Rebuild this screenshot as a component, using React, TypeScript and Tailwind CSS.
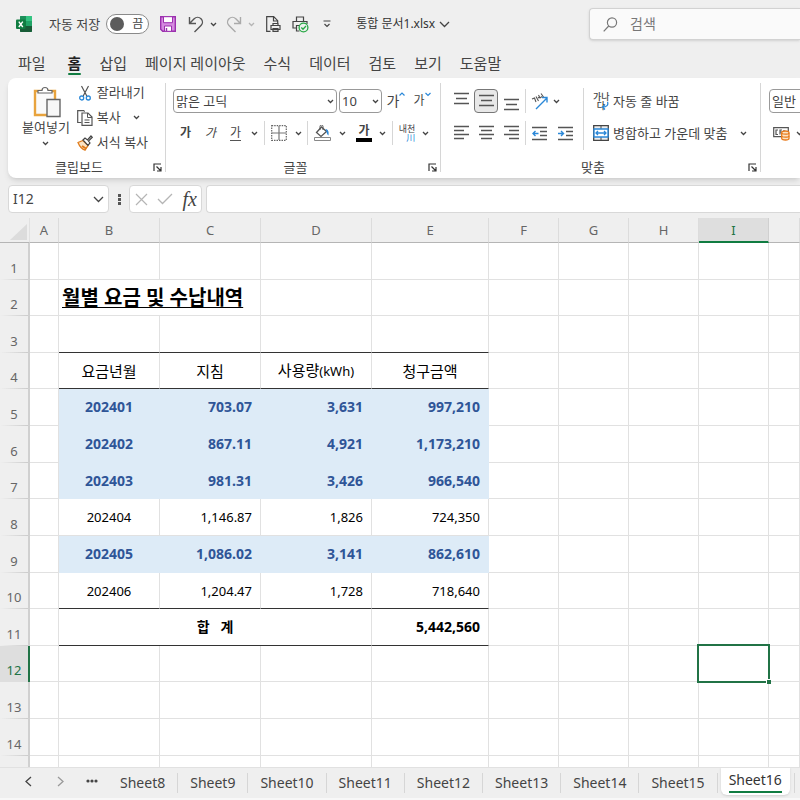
import type { ReactNode } from "react";

type Cell = { text: string; kind?: "head" | "code" | "num" };

type SheetRow = {
  no: number;
  tall?: boolean;
  highlight?: boolean;
  line?: boolean;
  cells?: string[];
};

const rows: SheetRow[] = [
  { no: 1, tall: true },
  { no: 2 },
  { no: 3, tall: true, line: true },
  { no: 4, line: true, cells: ["요금년월", "지침", "사용량(kWh)", "청구금액"] },
  { no: 5, tall: true, highlight: true, cells: ["202401", "703.07", "3,631", "997,210"] },
  { no: 6, tall: true, highlight: true, cells: ["202402", "867.11", "4,921", "1,173,210"] },
  { no: 7, highlight: true, cells: ["202403", "981.31", "3,426", "966,540"] },
  { no: 8, tall: true, cells: ["202404", "1,146.87", "1,826", "724,350"] },
  { no: 9, tall: true, highlight: true, cells: ["202405", "1,086.02", "3,141", "862,610"] },
  { no: 10, line: true, cells: ["202406", "1,204.47", "1,728", "718,640"] },
  { no: 11, tall: true, line: true },
  { no: 12 },
  { no: 13, tall: true },
  { no: 14, tall: true },
];

const columns = ["A", "B", "C", "D", "E", "F", "G", "H", "I", ""];
const menus = ["파일", "홈", "삽입", "페이지 레이아웃", "수식", "데이터", "검토", "보기", "도움말"];
const sheets = ["Sheet8", "Sheet9", "Sheet10", "Sheet11", "Sheet12", "Sheet13", "Sheet14", "Sheet15"];

function Svg({ w, h, children }: { w: number; h: number; children: ReactNode }) {
  return (
    <svg width={w} height={h} viewBox={`0 0 ${w} ${h}`} fill="none" className="shrink-0" aria-hidden="true">
      {children}
    </svg>
  );
}

function Chevron({ color = "#444" }: { color?: string }) {
  return (
    <Svg w={7} h={5}>
      <path d="M1 1l2.5 2.5L6 1" stroke={color} strokeWidth="1.3" />
    </Svg>
  );
}

function WideChevron() {
  return (
    <Svg w={11} h={7}>
      <path d="M1 1l4.5 4.5L10 1" stroke="#444" strokeWidth="1.3" />
    </Svg>
  );
}

function IconButton({ label, className, children }: { label: string; className: string; children: ReactNode }) {
  return (
    <button type="button" aria-label={label} className={`flex h-6 shrink-0 items-center justify-center ${className}`}>
      {children}
    </button>
  );
}

function Lines({ widths, align, gap = 4 }: { widths: number[]; align: "left" | "center" | "right"; gap?: number }) {
  return (
    <Svg w={15} h={widths.length * gap}>
      {widths.map((width, i) => {
        const x = align === "left" ? 0 : align === "right" ? 15 - width : (15 - width) / 2;
        return <path key={i} d={`M${x} ${i * gap + 1.5}h${width}`} stroke="#555" strokeWidth="1.4" />;
      })}
    </Svg>
  );
}

function Divider() {
  return <span className="h-6 w-px shrink-0 bg-[#d6d6d6]" />;
}

function Group({ name, className, children }: { name: string; className: string; children: ReactNode }) {
  return (
    <section aria-label={name} className={`relative flex shrink-0 flex-col ${className}`}>
      <div className="h-20">{children}</div>
      <div className="flex h-[18px] items-center justify-center pr-4 leading-[18px]">{name}</div>
      <button type="button" aria-label={`${name} 설정`} className="absolute right-1 bottom-1.5">
        <Svg w={9} h={9}>
          <path d="M1 8V1h7M3.5 3.5l4 4M8 4v4H4" stroke="#333" strokeWidth="1.2" />
        </Svg>
      </button>
      <span className="absolute top-[5px] right-0 bottom-[6px] w-px bg-[#d6d6d6]" />
    </section>
  );
}

function TitleBar() {
  return (
    <header className="flex h-12 shrink-0 items-center">
      <div className="flex shrink-0 items-center pl-4">
        <Svg w={16} h={16}>
          <rect x="4" y="0" width="12" height="16" rx="1" fill="#21a366" />
          <path d="M4 1a1 1 0 011-1h5v5H4z" fill="#1c8f5a" />
          <path d="M10 0h5a1 1 0 011 1v4h-6z" fill="#33c481" />
          <path d="M4 5h6v5H4z" fill="#107c41" />
          <path d="M4 10h12v5a1 1 0 01-1 1H5a1 1 0 01-1-1z" fill="#185c37" />
          <rect x="0" y="3.5" width="9.5" height="9.5" rx="1" fill="#107c41" />
          <path d="M2.8 5.6l4 5.4M6.8 5.6l-4 5.4" stroke="#fff" strokeWidth="1.4" />
        </Svg>
        <label className="relative ml-[17px] flex items-center gap-1.5 leading-5">
          <span>자동 저장</span>
          <input type="checkbox" className="sr-only" />
          <span className="flex h-5 w-[43px] items-center gap-2 rounded-full border border-[#8a8a8a] bg-white pl-[3px]">
            <span className="size-3.5 rounded-full bg-[#5c5c5c]" />
            <span className="text-xs leading-4">끔</span>
          </span>
        </label>
        <IconButton label="저장" className="ml-1 w-[30px]">
          <Svg w={16} h={16}>
            <path d="M.7.7h14.6v14.6H2.7l-2-2z" fill="#d58be0" stroke="#9b2fae" strokeWidth="1.4" />
            <path d="M3.5.7h9v6h-9z" fill="#fff" stroke="#9b2fae" />
            <path d="M4.5 10h7v5.3h-7z" fill="#fff" stroke="#9b2fae" />
            <path d="M6.5 12v3" stroke="#9b2fae" strokeWidth="1.4" />
          </Svg>
        </IconButton>
        <IconButton label="실행 취소" className="w-[26px]">
          <Svg w={16} h={17}>
            <path d="M1.5 1v6.5H8M2 7l4.2-4.2a4.8 4.8 0 016.8 6.8L6.5 16" stroke="#555" strokeWidth="1.4" />
          </Svg>
        </IconButton>
        <IconButton label="실행 취소 목록" className="w-2">
          <Chevron />
        </IconButton>
        <IconButton label="다시 실행" className="ml-1 w-[26px]">
          <Svg w={16} h={17}>
            <path d="M14.5 1v6.5H8M14 7L9.8 2.8A4.8 4.8 0 003 9.6L9.5 16" stroke="#aaa" strokeWidth="1.4" />
          </Svg>
        </IconButton>
        <IconButton label="다시 실행 목록" className="w-2">
          <Chevron color="#b5b5b5" />
        </IconButton>
        <IconButton label="인쇄 미리 보기" className="ml-1 w-7">
          <Svg w={15} h={16}>
            <path d="M4.5 15.3H.7V.7h7l4 4V7M7.5.7V5h4" stroke="#444" strokeWidth="1.2" />
            <path d="M5 9.5h9v4H5zM7 9.500v-2h5v2M7 12.5h5v2.8H7z" stroke="#444" strokeWidth="1.2" fill="#efefef" />
          </Svg>
        </IconButton>
        <IconButton label="빠른 인쇄" className="w-[26px]">
          <Svg w={17} h={17}>
            <path d="M4.500 5.500V1h7v4.500M4 12H1V5.500h14V8M4.500 9.500h4M4.500 9v6h3" stroke="#444" strokeWidth="1.2" />
            <circle cx="11.5" cy="11.5" r="4.4" stroke="#27a845" strokeWidth="1.3" fill="#efefef" />
            <path d="M9.3 11.5l1.7 1.7 3-3.2" stroke="#27a845" strokeWidth="1.3" />
          </Svg>
        </IconButton>
        <IconButton label="빠른 실행 도구 모음 사용자 지정" className="w-7">
          <Svg w={8} h={8}>
            <path d="M.5 1h7M1.5 4L4 6.5 6.5 4" stroke="#444" strokeWidth="1.2" />
          </Svg>
        </IconButton>
        <button type="button" className="ml-[15px] flex items-center gap-1 text-xs leading-5 text-[#333]">
          통합 문서1.xlsx
          <WideChevron />
        </button>
      </div>
      <label className="ml-auto flex h-8 w-[211px] shrink-0 items-center gap-3 rounded-l border border-r-0 border-[#d2d2d2] bg-[#fafafa] pl-[13px] shadow-sm">
        <Svg w={15} h={15}>
          <circle cx="9" cy="5.5" r="4.6" stroke="#777" strokeWidth="1.2" />
          <path d="M5.7 9l-5 5.3" stroke="#777" strokeWidth="1.2" />
        </Svg>
        <input type="search" aria-label="검색" placeholder="검색" className="w-full min-w-0 text-sm leading-5 outline-none placeholder:text-[#777]" />
      </label>
    </header>
  );
}

function MenuBar() {
  return (
    <nav className="flex h-[30px] shrink-0 pl-[9px] text-[15px]">
      {menus.map((menu) => (
        <a
          key={menu}
          href="#"
          className={
            menu === "홈"
              ? "relative ml-1 px-[9px] leading-[30px] font-bold text-[#222] after:absolute after:inset-x-[9px] after:bottom-[3px] after:h-0.5 after:rounded after:bg-[#107c41]"
              : "px-[9px] leading-[30px]"
          }
        >
          {menu}
        </a>
      ))}
    </nav>
  );
}

function ClipboardGroup() {
  return (
    <Group name="클립보드" className="w-[158px]">
      <div className="flex gap-[7px] pt-0.5 pl-3.5">
        <button type="button" className="flex flex-col items-center pt-1.5">
          <Svg w={30} h={32}>
            <path d="M4 5h20v24H4z" fill="#fafafa" stroke="#e8a33d" strokeWidth="2.4" />
            <path d="M7 7V4.5h4a3 3 0 016 0h4V7z" fill="#fff" stroke="#666" strokeWidth="1.2" />
            <path d="M16 13.5h13v17H16z" fill="#f7f7f7" stroke="#666" strokeWidth="1.4" />
          </Svg>
          <span className="leading-[18px]">붙여넣기</span>
          <span className="flex h-3.5 items-center">
            <Chevron />
          </span>
        </button>
        <div>
          <button type="button" className="flex h-[25px] items-center gap-1">
            <Svg w={16} h={16}>
              <path d="M4.5 1l5.3 10M11.5 1L6.200 11" stroke="#555" strokeWidth="1.2" />
              <circle cx="4.7" cy="13" r="2" stroke="#2b88d8" strokeWidth="1.3" />
              <circle cx="11.3" cy="13" r="2" stroke="#2b88d8" strokeWidth="1.3" />
            </Svg>
            잘라내기
          </button>
          <div className="flex h-[25px] items-center">
            <button type="button" className="flex items-center gap-1">
              <Svg w={16} h={16}>
                <path d="M4.5 12.5H.7V.7h6l1 1" stroke="#555" strokeWidth="1.2" />
                <path d="M5 3h6l4 4v8.3H5z" fill="#fff" stroke="#555" strokeWidth="1.2" />
                <path d="M10.5 3v4.5H15M7.5 10h5M7.5 12.5h5" stroke="#555" />
              </Svg>
              복사
            </button>
            <IconButton label="복사 옵션" className="ml-1 w-6">
              <Chevron />
            </IconButton>
          </div>
          <button type="button" className="flex h-[25px] items-center gap-1">
            <Svg w={16} h={16}>
              <path d="M1 7.500l5-2 5 5-3 4.700c-3-1-5.500-4-7-7.700z" fill="#fbe3c4" stroke="#e07b1a" strokeWidth="1.3" />
              <path d="M5 11l4 2.5" stroke="#e07b1a" strokeWidth="2" />
              <path d="M6 5l2-2 2.500 2L14 1l1.300 1.300L11.500 6l1.500 2-2 2.300z" fill="#fff" stroke="#444" strokeWidth="1.2" />
            </Svg>
            서식 복사
          </button>
        </div>
      </div>
    </Group>
  );
}

function FontGroup() {
  return (
    <Group name="글꼴" className="w-[275px]">
      <div className="flex items-center gap-0.5 pt-[11px] pl-[7px]">
        <span className="relative flex items-center">
          <select aria-label="글꼴 이름" className="h-6 w-[164px] appearance-none rounded border border-[#999] bg-white pl-0.5 leading-5">
            <option>맑은 고딕</option>
          </select>
          <span className="pointer-events-none absolute right-[3px]">
            <Chevron />
          </span>
        </span>
        <span className="relative flex items-center">
          <select aria-label="글꼴 크기" className="h-6 w-[43px] appearance-none rounded border border-[#999] bg-white pl-0.5 leading-5">
            <option>10</option>
          </select>
          <span className="pointer-events-none absolute right-[3px]">
            <Chevron />
          </span>
        </span>
        <IconButton label="글꼴 크기 크게" className="w-6 items-start text-sm leading-6">
          가
          <Svg w={6} h={14}>
            <path d="M.5 6.500L3 4l2.500 2.500" stroke="#2b88d8" strokeWidth="1.2" />
          </Svg>
        </IconButton>
        <IconButton label="글꼴 크기 작게" className="w-6 items-start text-xs leading-6">
          가
          <Svg w={6} h={14}>
            <path d="M.5 4L3 6.500 5.500 4" stroke="#2b88d8" strokeWidth="1.2" />
          </Svg>
        </IconButton>
      </div>
      <div className="flex items-center pt-2 pl-[7px] text-xs">
        <IconButton label="굵게" className="w-[25px] font-bold">
          가
        </IconButton>
        <IconButton label="기울임꼴" className="w-[25px] italic">
          가
        </IconButton>
        <IconButton label="밑줄" className="w-[25px]">
          <span className="border-b border-[#555] leading-[15px]">가</span>
        </IconButton>
        <IconButton label="밑줄 종류" className="mr-1 w-3">
          <Chevron />
        </IconButton>
        <Divider />
        <IconButton label="테두리" className="w-7">
          <Svg w={16} h={16}>
            <path d="M.7.7h14.6v14.6H.7z" stroke="#666" strokeWidth="1.2" strokeDasharray="1.5 1" />
            <path d="M8 1v14M1 8h14" stroke="#777" strokeWidth="1.2" />
          </Svg>
        </IconButton>
        <IconButton label="테두리 종류" className="mr-1 w-2.5">
          <Chevron />
        </IconButton>
        <Divider />
        <IconButton label="채우기 색" className="w-7">
          <Svg w={17} h={16}>
            <path d="M7.500 2l5 4.500-5.500 5-4.500-4z" fill="#fff" stroke="#555" strokeWidth="1.3" />
            <path d="M6 5V1.500a1.500 1.500 0 013 0V5" stroke="#555" />
            <path d="M11.500 4c3 .5 3.500 3 3 6.500-1.500-.5-1.500-3-3-6.500z" fill="#2b88d8" />
            <path d="M.5 12.500h16v3H.5z" fill="#fff" stroke="#888" />
          </Svg>
        </IconButton>
        <IconButton label="채우기 색 목록" className="mr-1 w-3">
          <Chevron />
        </IconButton>
        <IconButton label="글꼴 색" className="w-6">
          <span className="border-b-4 border-black px-0.5 leading-[14px] font-bold">가</span>
        </IconButton>
        <IconButton label="글꼴 색 목록" className="mr-1 w-3">
          <Chevron />
        </IconButton>
        <Divider />
        <IconButton label="윗주 표시" className="w-7">
          <span className="flex flex-col text-[9px] leading-[9px]">
            <span>내천</span>
            <span className="text-right text-[#2b88d8]">川</span>
          </span>
        </IconButton>
        <IconButton label="윗주 옵션" className="w-2">
          <Chevron />
        </IconButton>
      </div>
    </Group>
  );
}

function AlignGroup() {
  return (
    <Group name="맞춤" className="w-80">
      <div className="flex pt-2.5 pl-2">
        <div className="pt-px">
          <div className="flex items-center">
            <IconButton label="위쪽 맞춤" className="w-[25px] pb-1">
              <Lines widths={[15, 11, 15]} align="center" gap={5} />
            </IconButton>
            <IconButton label="가운데 맞춤" className="w-6 rounded border border-[#777] bg-[#e8e8e8]">
              <Lines widths={[15, 11, 15]} align="center" gap={5} />
            </IconButton>
            <IconButton label="아래쪽 맞춤" className="w-[27px] pt-2">
              <Lines widths={[15, 11, 15]} align="center" gap={5} />
            </IconButton>
            <Divider />
            <IconButton label="방향" className="w-[26px]">
              <Svg w={17} h={17}>
                <path d="M5 16L16 5M11 4.500h5v5" stroke="#2b88d8" strokeWidth="1.4" />
                <path d="M1 6l2.500-1L5 9M5 3.500L7.500 8M7 5l1.500-1M7.500 2L9 5l2-1.500M10 .5L12.500 4" stroke="#555" strokeWidth="1.1" />
              </Svg>
            </IconButton>
            <IconButton label="방향 목록" className="w-2">
              <Chevron />
            </IconButton>
          </div>
          <div className="flex items-center pt-2">
            <IconButton label="왼쪽 맞춤" className="w-[25px]">
              <Lines widths={[15, 10, 15, 10]} align="left" />
            </IconButton>
            <IconButton label="가로 가운데 맞춤" className="w-6">
              <Lines widths={[15, 11, 15, 11]} align="center" />
            </IconButton>
            <IconButton label="오른쪽 맞춤" className="w-[27px]">
              <Lines widths={[15, 10, 15, 10]} align="right" />
            </IconButton>
            <Divider />
            <IconButton label="내어쓰기" className="w-[26px]">
              <Svg w={15} h={15}>
                <path d="M0 1.500h15M8 5.500h7M8 9.500h7M0 13.500h15" stroke="#555" strokeWidth="1.4" />
                <path d="M6.500 7.500H1M3.500 5L1 7.500 3.500 10" stroke="#2b88d8" strokeWidth="1.4" />
              </Svg>
            </IconButton>
            <IconButton label="들여쓰기" className="w-[26px]">
              <Svg w={15} h={15}>
                <path d="M0 1.500h15M8 5.500h7M8 9.500h7M0 13.500h15" stroke="#555" strokeWidth="1.4" />
                <path d="M0 7.500h5.500M3 5l2.500 2.500L3 10" stroke="#2b88d8" strokeWidth="1.4" />
              </Svg>
            </IconButton>
          </div>
        </div>
        <span className="ml-[5px] h-[62px] w-px bg-[#d6d6d6]" />
        <div className="flex flex-col gap-2 pt-px pl-[9px]">
          <button type="button" className="flex h-6 items-center gap-1 leading-5">
            <span className="relative flex w-4 flex-col text-[9px] leading-[9px] font-medium whitespace-nowrap">
              <span>가나</span>
              <span>다</span>
              <span className="absolute right-0 bottom-0">
                <Svg w={8} h={8}>
                  <path d="M6.500 0c1 3-.5 5-5 5M4 2.500L1.500 5 4 7.500" stroke="#2b88d8" strokeWidth="1.3" />
                </Svg>
              </span>
            </span>
            자동 줄 바꿈
          </button>
          <div className="flex items-center">
            <button type="button" className="flex h-6 items-center gap-1 leading-5">
              <Svg w={16} h={16}>
                <path d="M.7.7h14.6v14.6H.7z" fill="#eee" stroke="#444" strokeWidth="1.3" />
                <path d="M8 1v3M8 12v3" stroke="#444" />
                <path d="M1 4h14v8H1z" fill="#fff" stroke="#2b88d8" strokeWidth="1.4" />
                <path d="M3 8h10M5 6L3 8l2 2M11 6l2 2-2 2" stroke="#2b88d8" strokeWidth="1.3" />
              </Svg>
              병합하고 가운데 맞춤
            </button>
            <IconButton label="병합 옵션" className="ml-1.5 w-5">
              <Chevron />
            </IconButton>
          </div>
        </div>
      </div>
    </Group>
  );
}

function Ribbon() {
  return (
    <div className="ml-2 flex h-[100px] shrink-0 overflow-hidden rounded-l-lg bg-white shadow-md">
      <ClipboardGroup />
      <FontGroup />
      <AlignGroup />
      <section aria-label="표시 형식" className="flex min-w-0 flex-1 flex-col gap-2 overflow-hidden pt-[11px] pl-2">
        <select aria-label="표시 형식" className="h-6 w-32 shrink-0 appearance-none rounded border border-[#999] bg-white pl-0.5 leading-5">
          <option>일반</option>
        </select>
        <div className="flex items-center">
          <IconButton label="회계 표시 형식" className="w-6">
            <Svg w={17} h={15}>
              <path d="M.7 1.700h14.600v9H.7z" stroke="#555" strokeWidth="1.2" />
              <path d="M5 4H3v4.500h2M9 4H7v4.500M7 6h2M11 4v2" stroke="#555" strokeWidth="1.2" />
              <path d="M8.700 6.500c0-2 7.300-2 7.300 0v6c0 2-7.300 2-7.300 0z" fill="#fbe3c4" stroke="#e8791a" strokeWidth="1.3" />
              <path d="M8.700 7c0 1.500 7.300 1.500 7.300 0M8.700 10c0 1.500 7.300 1.500 7.300 0" stroke="#e8791a" strokeWidth="1.2" />
            </Svg>
          </IconButton>
          <IconButton label="회계 표시 형식 목록" className="w-3">
            <Chevron />
          </IconButton>
        </div>
      </section>
    </div>
  );
}

function FormulaBar() {
  return (
    <div className="mt-[7px] flex h-7 shrink-0 items-center pl-2">
      <label className="flex h-7 w-[101px] items-center rounded border border-[#d8d8d8] bg-white pr-1">
        <input aria-label="이름 상자" defaultValue="I12" className="w-full min-w-0 pl-1 text-sm leading-5 outline-none" />
        <WideChevron />
      </label>
      <span className="flex w-5 justify-center">
        <Svg w={3} h={11}>
          <path d="M0 0h3v3H0zM0 4h3v3H0zM0 8h3v3H0z" fill="#555" />
        </Svg>
      </span>
      <div className="flex h-7 w-[73px] items-center justify-between rounded border border-[#d8d8d8] bg-white pr-1 pl-[5px]">
        <button type="button" aria-label="취소">
          <Svg w={13} h={13}>
            <path d="M1 1l11 11M12 1L1 12" stroke="#b5b5b5" strokeWidth="1.2" />
          </Svg>
        </button>
        <button type="button" aria-label="입력">
          <Svg w={16} h={12}>
            <path d="M1 6l4.500 4.500L15 1" stroke="#b5b5b5" strokeWidth="1.3" />
          </Svg>
        </button>
        <button type="button" className="font-['Liberation_Serif',serif] text-xl leading-6 italic">
          fx
        </button>
      </div>
      <input aria-label="수식 입력줄" className="ml-1 h-7 min-w-0 flex-1 rounded-l border border-r-0 border-[#d8d8d8] bg-white px-2 outline-none" />
    </div>
  );
}

function DataCell({ text, kind, highlight, line }: Cell & { highlight?: boolean; line?: boolean }) {
  const align = kind === "num" ? "pr-2 text-right" : "text-center";
  const size = highlight ? "text-sm font-bold text-[#2f5597]" : kind === "head" ? "text-[15px]" : "";
  const fill = highlight ? "border-[#ddebf7] bg-[#ddebf7]" : "border-[#e1e1e1]";
  return (
    <td className={`border-r border-b ${align} ${size} ${fill} ${line ? "border-b-[#333]" : ""}`}>
      {text.endsWith("(kWh)") ? (
        <>
          {text.replace("(kWh)", "")}
          <span className="text-[13px]">(kWh)</span>
        </>
      ) : (
        text
      )}
    </td>
  );
}

function BodyCells({ row }: { row: SheetRow }) {
  if (row.cells) {
    return row.cells.map((text, i) => (
      <DataCell
        key={i}
        text={text}
        kind={row.no === 4 ? "head" : i === 0 ? "code" : "num"}
        highlight={row.highlight}
        line={row.line}
      />
    ));
  }
  if (row.no === 2) {
    return (
      <>
        <td colSpan={2} className="border-r border-b border-[#e1e1e1] pl-[3px] text-xl font-bold whitespace-nowrap">
          <span className="underline decoration-1 underline-offset-2">월별 요금 및 수납내역</span>
        </td>
        <DataCell text="" />
        <DataCell text="" />
      </>
    );
  }
  if (row.no === 11) {
    return (
      <>
        <td colSpan={3} className="border-r border-b border-[#e1e1e1] border-b-[#333] text-center text-sm font-bold whitespace-pre">
          {"합   계"}
        </td>
        <td className="border-r border-b border-[#e1e1e1] border-b-[#333] pr-2 text-right text-sm font-bold">5,442,560</td>
      </>
    );
  }
  return [0, 1, 2, 3].map((i) => <DataCell key={i} text="" line={row.line} />);
}

function Grid() {
  return (
    <main className="mt-[5px] min-h-0 flex-1 overflow-hidden">
      <table className="w-full table-fixed border-separate border-spacing-0 leading-5 text-black">
        <colgroup>
          <col className="w-[30px]" />
          <col className="w-[29px]" />
          <col className="w-[101px]" />
          <col className="w-[101px]" />
          <col className="w-[111px]" />
          <col className="w-[117px]" />
          <col className="w-[70px]" />
          <col className="w-[70px]" />
          <col className="w-[70px]" />
          <col className="w-[70px]" />
          <col />
        </colgroup>
        <thead>
          <tr className="h-[25px] text-[#666]">
            <th aria-label="모두 선택" className="border-r border-b border-r-[#e1e1e1] border-b-[#b5b5b5] pt-1 pl-2.5">
              <Svg w={17} h={16}>
                <path d="M17 0v16H0z" fill="#dcdcdc" />
              </Svg>
            </th>
            {columns.map((name) => (
              <th
                key={name}
                className={
                  name === "I"
                    ? "border-r border-b-2 border-r-[#d0d0d0] border-b-[#107c41] bg-[#dedede] font-normal text-[#217346]"
                    : "border-r border-b border-r-[#dcdcdc] border-b-[#b5b5b5] font-normal"
                }
              >
                {name}
              </th>
            ))}
          </tr>
        </thead>
        <tbody className="bg-white">
          {rows.map((row) => (
            <tr key={row.no} className={row.tall ? "h-[37px]" : "h-9"}>
              <th
                className={
                  row.no === 12
                    ? "border-r-2 border-[#217346] bg-[#dedede] pb-0.5 align-bottom font-normal text-[#217346]"
                    : "border-r-2 border-[#d0d0d0] bg-[#efefef] bg-[linear-gradient(to_right,transparent,#cccccc)] bg-[length:100%_1px] bg-bottom bg-no-repeat pb-0.5 align-bottom font-normal text-[#666]"
                }
              >
                {row.no}
              </th>
              <td className="border-r border-b border-[#e1e1e1]" />
              <BodyCells row={row} />
              {["F", "G", "H", "I", "J"].map((name) => (
                <td key={name} className="relative border-r border-b border-[#e1e1e1]">
                  {name === "I" && row.no === 12 && (
                    <span className="absolute -inset-0.5 z-10 border-2 border-[#217346]">
                      <span className="absolute -right-[3px] -bottom-[3px] size-[5px] border-t border-l border-white bg-[#217346]" />
                    </span>
                  )}
                </td>
              ))}
            </tr>
          ))}
          {/* next row, only its top edge shows above the sheet tabs */}
          <tr className="h-9">
            <td className="border-r-2 border-[#d0d0d0] bg-[#efefef]" />
            {columns.map((name) => (
              <td key={name} className="border-r border-[#e1e1e1]" />
            ))}
          </tr>
        </tbody>
      </table>
    </main>
  );
}

function SheetTabs() {
  return (
    <footer className="flex h-[33px] shrink-0 overflow-hidden border-t border-b-2 border-t-[#e1e1e1] border-b-[#f8f8f8] text-sm text-[#444]">
      <div className="flex w-[108px] shrink-0 items-center pb-1 pl-3">
        <IconButton label="이전 시트" className="w-8">
          <Svg w={7} h={11}>
            <path d="M6 1L1 5.500 6 10" stroke="#444" strokeWidth="1.3" />
          </Svg>
        </IconButton>
        <IconButton label="다음 시트" className="w-8">
          <Svg w={7} h={11}>
            <path d="M1 1l5 4.500L1 10" stroke="#999" strokeWidth="1.3" />
          </Svg>
        </IconButton>
        <IconButton label="시트 목록" className="w-8">
          <Svg w={12} h={4}>
            <circle cx="2" cy="2" r="1.6" fill="#444" />
            <circle cx="6" cy="2" r="1.6" fill="#444" />
            <circle cx="10" cy="2" r="1.6" fill="#444" />
          </Svg>
        </IconButton>
      </div>
      {sheets.map((name) => (
        <button key={name} type="button" className="my-[5px] shrink-0 border-r border-[#d6d6d6] px-3 leading-5">
          {name}
        </button>
      ))}
      <button type="button" className="-mt-px mb-[3px] ml-[3px] shrink-0 rounded-b-md bg-white px-2 text-[#333] shadow-sm">
        <span className="block border-b-2 border-[#107c41] leading-[22px]">Sheet16</span>
      </button>
      <span className="my-[5px] ml-1 w-px bg-[#d6d6d6]" />
    </footer>
  );
}

export default function App() {
  return (
    <div className="flex h-screen flex-col overflow-hidden bg-[#efefef] font-['Noto_Sans','Noto_Sans_CJK_KR',sans-serif] text-[13px] text-[#444]">
      <TitleBar />
      <MenuBar />
      <Ribbon />
      <FormulaBar />
      <Grid />
      <SheetTabs />
    </div>
  );
}
